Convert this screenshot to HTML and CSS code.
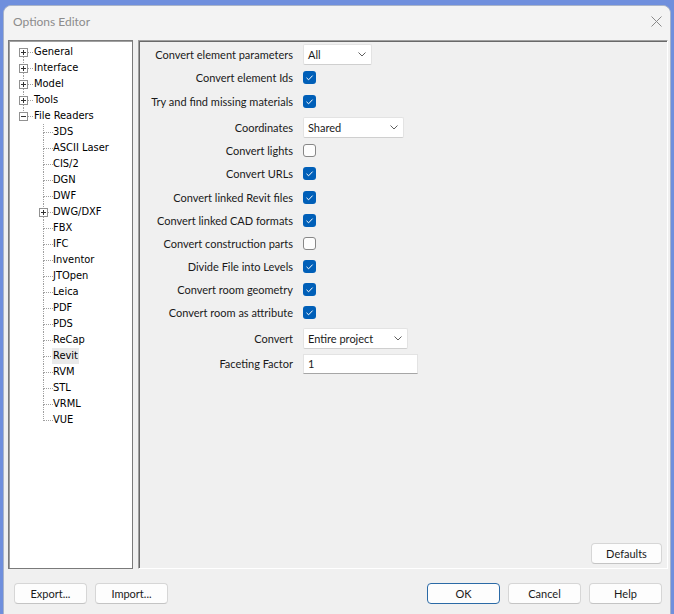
FILE: index.html
```html
<!DOCTYPE html>
<html lang="en">
<head>
    <meta charset="UTF-8">
    <meta name="viewport" content="width=device-width, initial-scale=1.0">
    <title>Options Editor</title>
    <link rel="stylesheet" href="styles.css">
</head>
<body>
    <div class="window">
        <div class="titlebar">
            <span class="title">Options Editor</span>
            <svg class="close" width="11" height="11" viewBox="0 0 11 11"><path d="M0.5 0.5L10.5 10.5M10.5 0.5L0.5 10.5" stroke="#8a8a8a" stroke-width="1" fill="none"/></svg>
        </div>

        <div class="main">
            <!-- tree of option groups -->
            <div class="tree">
                <div class="row first"><span class="node"><svg class="box" viewBox="0 0 9 9"><rect x="0.5" y="0.5" width="8" height="8" fill="#fff" stroke="#919191"/><path d="M2 4.5H7M4.5 2V7" stroke="#333"/></svg></span><span class="label">General</span></div>
                <div class="row"><span class="node"><svg class="box" viewBox="0 0 9 9"><rect x="0.5" y="0.5" width="8" height="8" fill="#fff" stroke="#919191"/><path d="M2 4.5H7M4.5 2V7" stroke="#333"/></svg></span><span class="label">Interface</span></div>
                <div class="row"><span class="node"><svg class="box" viewBox="0 0 9 9"><rect x="0.5" y="0.5" width="8" height="8" fill="#fff" stroke="#919191"/><path d="M2 4.5H7M4.5 2V7" stroke="#333"/></svg></span><span class="label">Model</span></div>
                <div class="row"><span class="node"><svg class="box" viewBox="0 0 9 9"><rect x="0.5" y="0.5" width="8" height="8" fill="#fff" stroke="#919191"/><path d="M2 4.5H7M4.5 2V7" stroke="#333"/></svg></span><span class="label">Tools</span></div>
                <div class="row last"><span class="node"><svg class="box" viewBox="0 0 9 9"><rect x="0.5" y="0.5" width="8" height="8" fill="#fff" stroke="#919191"/><path d="M2 4.5H7" stroke="#333"/></svg></span><span class="label">File Readers</span></div>

                <div class="row child"><span class="guide"></span><span class="node"></span><span class="label">3DS</span></div>
                <div class="row child"><span class="guide"></span><span class="node"></span><span class="label">ASCII Laser</span></div>
                <div class="row child"><span class="guide"></span><span class="node"></span><span class="label">CIS/2</span></div>
                <div class="row child"><span class="guide"></span><span class="node"></span><span class="label">DGN</span></div>
                <div class="row child"><span class="guide"></span><span class="node"></span><span class="label">DWF</span></div>
                <div class="row child"><span class="guide"></span><span class="node"><svg class="box" viewBox="0 0 9 9"><rect x="0.5" y="0.5" width="8" height="8" fill="#fff" stroke="#919191"/><path d="M2 4.5H7M4.5 2V7" stroke="#333"/></svg></span><span class="label">DWG/DXF</span></div>
                <div class="row child"><span class="guide"></span><span class="node"></span><span class="label">FBX</span></div>
                <div class="row child"><span class="guide"></span><span class="node"></span><span class="label">IFC</span></div>
                <div class="row child"><span class="guide"></span><span class="node"></span><span class="label">Inventor</span></div>
                <div class="row child"><span class="guide"></span><span class="node"></span><span class="label">JTOpen</span></div>
                <div class="row child"><span class="guide"></span><span class="node"></span><span class="label">Leica</span></div>
                <div class="row child"><span class="guide"></span><span class="node"></span><span class="label">PDF</span></div>
                <div class="row child"><span class="guide"></span><span class="node"></span><span class="label">PDS</span></div>
                <div class="row child"><span class="guide"></span><span class="node"></span><span class="label">ReCap</span></div>
                <div class="row child"><span class="guide"></span><span class="node"></span><span class="label selected">Revit</span></div>
                <div class="row child"><span class="guide"></span><span class="node"></span><span class="label">RVM</span></div>
                <div class="row child"><span class="guide"></span><span class="node"></span><span class="label">STL</span></div>
                <div class="row child"><span class="guide"></span><span class="node"></span><span class="label">VRML</span></div>
                <div class="row child last"><span class="guide"></span><span class="node"></span><span class="label">VUE</span></div>
            </div>

            <!-- settings of the selected reader -->
            <div class="panel">
                <div class="form">
                    <div class="frow">
                        <span class="flabel">Convert element parameters</span>
                        <div class="select w-all">All<svg class="chev" width="8" height="5" viewBox="0 0 8 5"><path d="M0.5 0.5L4 4L7.5 0.5" stroke="#5f5f5f" fill="none"/></svg></div>
                    </div>
                    <div class="frow">
                        <span class="flabel">Convert element Ids</span>
                        <svg class="check" width="13" height="13" viewBox="0 0 13 13"><rect width="13" height="13" rx="3" fill="#005fb8"/><path d="M3.5 6.8L5.6 8.8L9.6 4.6" stroke="#fff" stroke-width="1" fill="none"/></svg>
                    </div>
                    <div class="frow tall">
                        <span class="flabel">Try and find missing materials</span>
                        <svg class="check" width="13" height="13" viewBox="0 0 13 13"><rect width="13" height="13" rx="3" fill="#005fb8"/><path d="M3.5 6.8L5.6 8.8L9.6 4.6" stroke="#fff" stroke-width="1" fill="none"/></svg>
                    </div>
                    <div class="frow gap">
                        <span class="flabel">Coordinates</span>
                        <div class="select w-coord">Shared<svg class="chev" width="8" height="5" viewBox="0 0 8 5"><path d="M0.5 0.5L4 4L7.5 0.5" stroke="#5f5f5f" fill="none"/></svg></div>
                    </div>
                    <div class="frow">
                        <span class="flabel">Convert lights</span>
                        <svg class="check" width="13" height="13" viewBox="0 0 13 13"><rect x="0.5" y="0.5" width="12" height="12" rx="2.5" fill="#fdfdfd" stroke="#878787"/></svg>
                    </div>
                    <div class="frow">
                        <span class="flabel">Convert URLs</span>
                        <svg class="check" width="13" height="13" viewBox="0 0 13 13"><rect width="13" height="13" rx="3" fill="#005fb8"/><path d="M3.5 6.8L5.6 8.8L9.6 4.6" stroke="#fff" stroke-width="1" fill="none"/></svg>
                    </div>
                    <div class="frow tall">
                        <span class="flabel">Convert linked Revit files</span>
                        <svg class="check" width="13" height="13" viewBox="0 0 13 13"><rect width="13" height="13" rx="3" fill="#005fb8"/><path d="M3.5 6.8L5.6 8.8L9.6 4.6" stroke="#fff" stroke-width="1" fill="none"/></svg>
                    </div>
                    <div class="frow">
                        <span class="flabel">Convert linked CAD formats</span>
                        <svg class="check" width="13" height="13" viewBox="0 0 13 13"><rect width="13" height="13" rx="3" fill="#005fb8"/><path d="M3.5 6.8L5.6 8.8L9.6 4.6" stroke="#fff" stroke-width="1" fill="none"/></svg>
                    </div>
                    <div class="frow">
                        <span class="flabel">Convert construction parts</span>
                        <svg class="check" width="13" height="13" viewBox="0 0 13 13"><rect x="0.5" y="0.5" width="12" height="12" rx="2.5" fill="#fdfdfd" stroke="#878787"/></svg>
                    </div>
                    <div class="frow">
                        <span class="flabel">Divide File into Levels</span>
                        <svg class="check" width="13" height="13" viewBox="0 0 13 13"><rect width="13" height="13" rx="3" fill="#005fb8"/><path d="M3.5 6.8L5.6 8.8L9.6 4.6" stroke="#fff" stroke-width="1" fill="none"/></svg>
                    </div>
                    <div class="frow">
                        <span class="flabel">Convert room geometry</span>
                        <svg class="check" width="13" height="13" viewBox="0 0 13 13"><rect width="13" height="13" rx="3" fill="#005fb8"/><path d="M3.5 6.8L5.6 8.8L9.6 4.6" stroke="#fff" stroke-width="1" fill="none"/></svg>
                    </div>
                    <div class="frow">
                        <span class="flabel">Convert room as attribute</span>
                        <svg class="check" width="13" height="13" viewBox="0 0 13 13"><rect width="13" height="13" rx="3" fill="#005fb8"/><path d="M3.5 6.8L5.6 8.8L9.6 4.6" stroke="#fff" stroke-width="1" fill="none"/></svg>
                    </div>
                    <div class="frow gap">
                        <span class="flabel">Convert</span>
                        <div class="select w-convert">Entire project<svg class="chev" width="8" height="5" viewBox="0 0 8 5"><path d="M0.5 0.5L4 4L7.5 0.5" stroke="#5f5f5f" fill="none"/></svg></div>
                    </div>
                    <div class="frow gap-sm">
                        <span class="flabel">Faceting Factor</span>
                        <div class="textbox">1</div>
                    </div>
                </div>
                <div class="panel-foot">
                    <button class="btn">Defaults</button>
                </div>
            </div>
        </div>

        <div class="buttons">
            <button class="btn">Export...</button>
            <button class="btn">Import...</button>
            <span class="spacer"></span>
            <button class="btn default">OK</button>
            <button class="btn">Cancel</button>
            <button class="btn">Help</button>
        </div>
    </div>
</body>
</html>
```
FILE: styles.css
```css
html, body {
    margin: 0;
    height: 100%;
    overflow: hidden;
}

body {
    background: #6f8fdd;
    font-family: Lato, "Noto Sans", sans-serif;
    font-size: 11px;
    color: #1a1a1a;
}

.window {
    box-sizing: border-box;
    margin: 5px 3px 0 3px;
    height: 620px;
    background: #f0f0f0;
    border: 1px solid #a9b4c9;
    border-radius: 8px 8px 0 0;
}

.titlebar {
    height: 34px;
    display: flex;
    align-items: center;
    justify-content: space-between;
    padding: 0 8px 0 9px;
    background: #f3f3f3;
    border-radius: 8px 8px 0 0;
}

.title {
    font-size: 12px;
    color: #8c8c8c;
    padding-bottom: 4px;
}

.close {
    margin-bottom: 3px;
}

.main {
    display: flex;
    gap: 5px;
    height: 529px;
    padding: 0 2px 0 4px;
}

/* ---- tree ---- */

.tree {
    box-sizing: border-box;
    width: 125px;
    background: #fff;
    border: 1px solid #7a7a7a;
    box-shadow: inset 1px 1px 0 #a0a0a0;
    padding: 3px 0 0 4px;
    font-family: "DejaVu Sans Condensed", "DejaVu Sans", sans-serif;
    font-size: 11px;
    color: #000;
}

.row {
    display: flex;
    height: 16px;
    align-items: center;
}

.guide {
    width: 20px;
    height: 16px;
    flex: none;
}

.node {
    flex: none;
    display: grid;
    grid-template-columns: 10px 10px;
    grid-template-rows: 9px 7px;
    width: 20px;
    height: 16px;
}

.node::before {
    content: "";
    grid-area: 1 / 2 / 2 / 3;
    border-left: 1px dotted #a0a0a0;
    border-bottom: 1px dotted #a0a0a0;
}

.node::after {
    content: "";
    grid-area: 2 / 2 / 3 / 3;
    border-left: 1px dotted #a0a0a0;
}

.first .node::before {
    border-left: none;
}

.last .node::after {
    border-left: none;
}

.box {
    grid-area: 1 / 1 / 3 / 3;
    justify-self: start;
    align-self: start;
    width: 9px;
    height: 9px;
    margin: 4px 0 0 6px;
    z-index: 1;
}

.label {
    line-height: 16px;
    padding: 0 1px;
    white-space: nowrap;
}

.child .label {
    margin-left: -1px;
}

.label.selected {
    background: #e9e9e9;
}

/* ---- settings panel ---- */

.panel {
    box-sizing: border-box;
    flex: 1;
    display: flex;
    flex-direction: column;
    border-top: 1px solid #a0a0a0;
    border-left: 1px solid #a0a0a0;
    border-right: 1px solid #fff;
    border-bottom: 1px solid #fff;
    box-shadow: inset 1px 1px 0 #696969;
    padding: 2px 0 0 1px;
}

.form {
    flex: 1;
}

.frow {
    display: flex;
    align-items: center;
    height: 23px;
}

.frow.tall {
    height: 24px;
}

.frow.gap {
    margin-top: 3px;
}

.frow.gap-sm {
    margin-top: 2px;
}

.flabel {
    width: 153px;
    margin-right: 10px;
    text-align: right;
    white-space: nowrap;
}

.check {
    display: block;
}

.select {
    box-sizing: border-box;
    height: 21px;
    display: flex;
    align-items: center;
    justify-content: space-between;
    padding: 0 5px 0 4px;
    background: #fff;
    border: 1px solid #e3e3e3;
    border-bottom-color: #cfcfcf;
    border-radius: 2px;
}

.w-all { width: 69px; }
.w-coord { width: 101px; }
.w-convert { width: 105px; }

.textbox {
    box-sizing: border-box;
    width: 115px;
    height: 20px;
    line-height: 18px;
    padding: 0 4px;
    background: #fff;
    border: 1px solid #e3e3e3;
    border-bottom-color: #a6a6a6;
}

.panel-foot {
    display: flex;
    justify-content: flex-end;
    padding: 0 5px 4px 0;
}

/* ---- buttons ---- */

.btn {
    box-sizing: border-box;
    width: 73px;
    height: 21px;
    padding: 0;
    font-family: Lato, "Noto Sans", sans-serif;
    font-size: 11px;
    color: #1a1a1a;
    background: #fdfdfd;
    border: 1px solid #d6d6d6;
    border-bottom-color: #c4c4c4;
    border-radius: 4px;
}

.panel-foot .btn {
    width: 71px;
}

.btn.default {
    border-color: #2b6aa6;
}

.buttons {
    display: flex;
    gap: 8px;
    padding: 14px 8px 0 10px;
}

.spacer {
    flex: 1;
}
```
